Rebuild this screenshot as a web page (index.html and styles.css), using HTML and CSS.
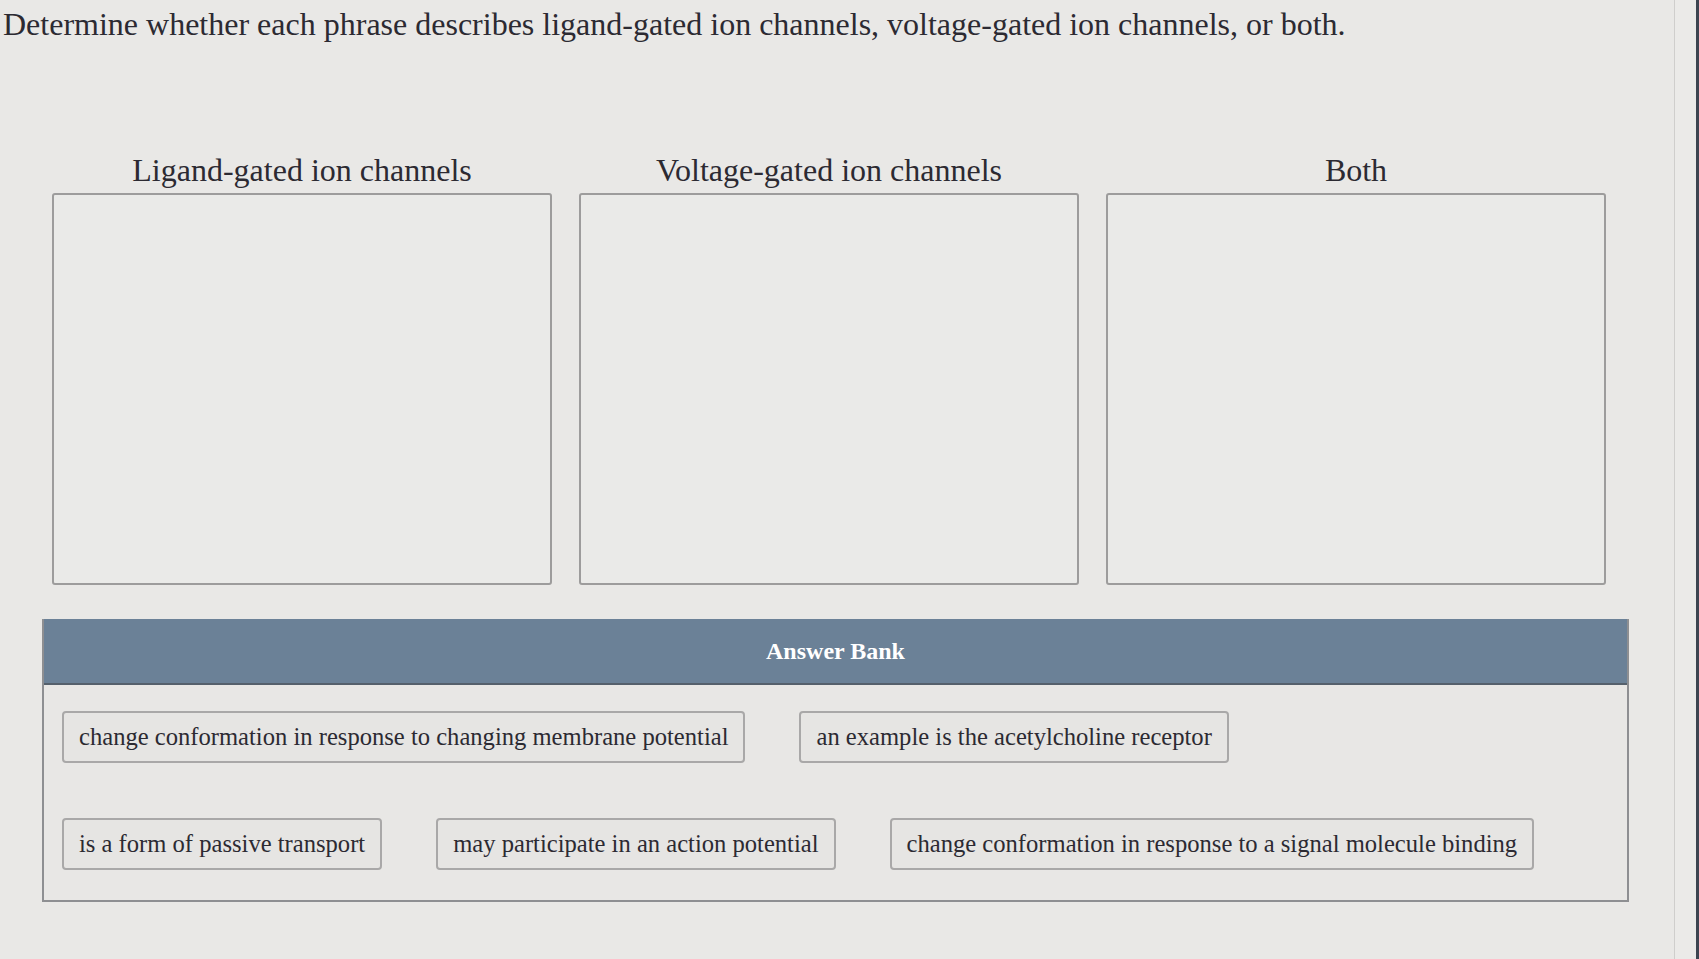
FILE: index.html
```html
<!DOCTYPE html>
<html lang="en">
<head>
  <meta charset="UTF-8">
  <meta name="viewport" content="width=device-width, initial-scale=1.0">
  <title>Ion channels - Sorting</title>
  <link rel="stylesheet" href="styles.css">
</head>
<body>
  <div class="page">
    <div class="question">
      <p class="prompt">Determine whether each phrase describes ligand-gated ion channels, voltage-gated ion channels, or both.</p>

      <div class="bins">
        <div class="bin">
          <div class="bin-label">Ligand-gated ion channels</div>
          <div class="bin-drop"></div>
        </div>
        <div class="bin">
          <div class="bin-label">Voltage-gated ion channels</div>
          <div class="bin-drop"></div>
        </div>
        <div class="bin">
          <div class="bin-label">Both</div>
          <div class="bin-drop"></div>
        </div>
      </div>

      <div class="answer-bank">
        <div class="bank-title">Answer Bank</div>
        <div class="bank-items">
          <div class="bank-row">
            <div class="chip">change conformation in response to changing membrane potential</div>
            <div class="chip">an example is the acetylcholine receptor</div>
          </div>
          <div class="bank-row">
            <div class="chip">is a form of passive transport</div>
            <div class="chip">may participate in an action potential</div>
            <div class="chip">change conformation in response to a signal molecule binding</div>
          </div>
        </div>
      </div>
    </div>
    <div class="scroll-edge"></div>
  </div>
</body>
</html>
```

FILE: styles.css
```css
body {
  margin: 0;
  padding: 0;
  background-color: #e9e8e6;
  font-family: "Liberation Serif", "Times New Roman", serif;
  color: #2c2a32;
}
.page {
  display: flex;
  height: 959px;
}
.question {
  flex: 1;
  padding-left: 3px;
}
.scroll-edge {
  width: 21px;
  border-left: 1px solid #cfcecc;
  background: #ebeae8;
  border-right: 3px solid #3c4450;
}
.prompt {
  margin: 0;
  padding-top: 5px;
  font-size: 32px;
  line-height: 38px;
}
.bins {
  display: flex;
  gap: 27px;
  padding-left: 49px;
  margin-top: 109px;
}
.bin {
  width: 500px;
  display: flex;
  flex-direction: column;
  align-items: center;
}
.bin-label {
  font-size: 32px;
  line-height: 36px;
  margin-bottom: 5px;
}
.bin-drop {
  width: 100%;
  height: 392px;
  box-sizing: border-box;
  border: 2px solid #9d9c9c;
  border-radius: 3px;
  background: #eaeae8;
}
.answer-bank {
  margin-top: 34px;
  margin-left: 39px;
  width: 1587px;
  box-sizing: border-box;
  border: 2px solid #8e8f92;
  border-top: none;
  background: #e8e7e5;
}
.bank-title {
  background: #6b8197;
  color: #fff;
  font-weight: bold;
  font-size: 24px;
  line-height: 64px;
  text-align: center;
  border-bottom: 2px solid #55606c;
}
.bank-items {
  padding: 26px 18px 30px;
  display: flex;
  flex-direction: column;
  gap: 55px;
}
.bank-row {
  display: flex;
  gap: 54px;
}
.chip {
  font-size: 24.6px;
  line-height: 48px;
  padding: 0 15px;
  border: 2px solid #a9a8a8;
  border-radius: 4px;
  background: #e6e5e3;
  white-space: nowrap;
}
```
